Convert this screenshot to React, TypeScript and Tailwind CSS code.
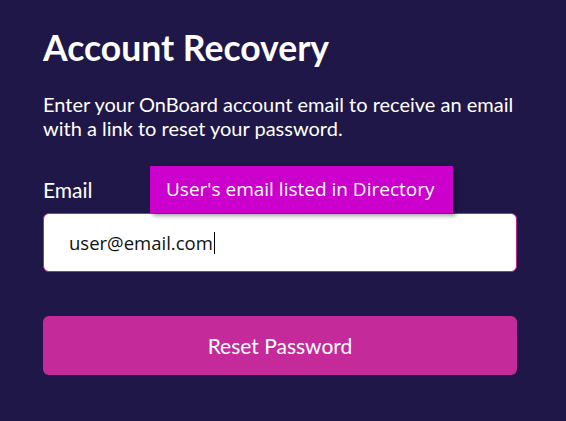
import React from "react";

export default function App() {
  return (
    <div className="w-[566px] h-[421px] bg-[#1f1748] overflow-hidden" style={{ fontFamily: "Lato, 'Liberation Sans', sans-serif" }}>
      <div className="pl-[43px] pr-[38px] pt-[26px]">
        <h1 className="text-white font-bold text-[35.5px] leading-[44px]">Account Recovery</h1>
        <p className="mt-[22px] text-white text-[20px] leading-[24px]">
          Enter your OnBoard account email to receive an email with a link to reset your password.
        </p>
        <div className="relative mt-[38px]">
          <label className="block text-white text-[21px] leading-[24px]">Email</label>
          <div className="mt-[11px] mr-[11px] h-[59px] bg-white border border-[#c0238f] rounded-[6px] flex items-center pl-[25px]">
            <span className="text-[#111] text-[18.5px]" style={{ fontFamily: "'Open Sans', 'Noto Sans', sans-serif" }}>user@email.com</span>
            <span className="w-px h-[22px] bg-black ml-px"></span>
          </div>
          <div
            className="absolute left-[107px] top-[-12px] w-[303px] h-[47px] bg-[#cc00cc] flex items-center pl-[16px] text-white text-[19px] shadow-[3px_3px_4px_rgba(0,0,0,0.35)]"
            style={{ fontFamily: "'Open Sans', 'Noto Sans', sans-serif" }}
          >
            User's email listed in Directory
          </div>
        </div>
        <button className="mt-[44px] w-[474px] h-[59px] rounded-[6px] bg-[#c52a9b] text-white text-[21px]">
          Reset Password
        </button>
      </div>
    </div>
  );
}
